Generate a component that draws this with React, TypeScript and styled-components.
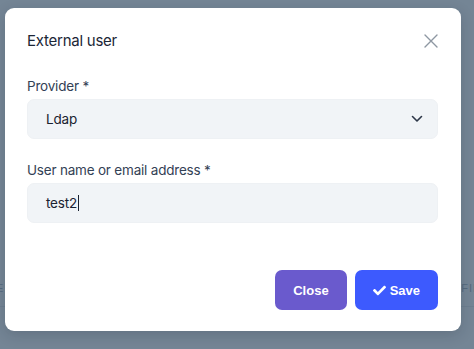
import React from 'react';
import styled, { createGlobalStyle } from 'styled-components';
import { FaCheck } from 'react-icons/fa';

const GlobalStyle = createGlobalStyle`
  html, body {
    margin: 0;
    padding: 0;
    width: 474px;
    height: 349px;
    overflow: hidden;
    background: #72879a;
    font-family: Inter, "Noto Sans", sans-serif;
  }
`;

const Page = styled.div`
  position: relative;
  width: 474px;
  height: 349px;
  background: #ffffff;
`;

const BackTable = styled.div`
  display: flex;
  flex-direction: column;
  padding-top: 270px;
`;

const BackRow = styled.div`
  display: flex;
  justify-content: space-between;
  align-items: center;
  height: 36px;
  border-bottom: 1px solid #dfe3e8;
  font-family: "Liberation Sans", Arial, sans-serif;
  font-size: 11px;
  letter-spacing: 1px;
  color: #8a96a3;
  margin-left: -4px;
  margin-right: -8px;
`;

const Overlay = styled.div`
  position: absolute;
  inset: 0;
  background: rgba(67, 90, 112, 0.74);
  display: flex;
  align-items: flex-start;
  justify-content: flex-start;
  padding: 8px 0 0 5px;
`;

const Modal = styled.div`
  width: 456px;
  height: 323px;
  box-sizing: border-box;
  background: #ffffff;
  border-radius: 9px;
  padding: 22px 23px 21px 22px;
  display: flex;
  flex-direction: column;
  box-shadow: 0 4px 14px rgba(20, 30, 45, 0.18);
`;

const Header = styled.div`
  display: flex;
  align-items: center;
  justify-content: space-between;
  height: 22px;
`;

const Title = styled.h2`
  margin: 0;
  font-size: 15px;
  font-weight: 400;
  letter-spacing: -0.25px;
  color: #1b2636;
  line-height: 22px;
`;

const CloseIcon = styled.button`
  border: none;
  background: none;
  padding: 0;
  width: 16px;
  height: 16px;
  margin-right: -1px;
  display: flex;
  cursor: pointer;
`;

const Field = styled.div<{ $top: number }>`
  display: flex;
  flex-direction: column;
  gap: 3px;
  margin-top: ${p => p.$top}px;
`;

const Label = styled.label`
  font-size: 13.5px;
  line-height: 20px;
  letter-spacing: -0.2px;
  color: #334155;
`;

const Box = styled.div`
  height: 40px;
  box-sizing: border-box;
  background: #f1f4f7;
  border: 1px solid #eef1f4;
  border-radius: 7px;
  padding: 0 14px 0 18px;
  display: flex;
  align-items: center;
  justify-content: space-between;
  font-size: 13.5px;
  letter-spacing: -0.2px;
  color: #1a2230;
`;

const Caret = styled.span`
  display: inline-block;
  width: 1px;
  height: 16px;
  background: #1a2230;
  margin-left: 1px;
`;

const Value = styled.span`
  display: flex;
  align-items: center;
`;

const Footer = styled.div`
  margin-top: auto;
  display: flex;
  justify-content: flex-end;
  gap: 8px;
`;

const Button = styled.button<{ $variant: 'close' | 'save' }>`
  height: 40px;
  border: none;
  border-radius: 7px;
  background: ${p => (p.$variant === 'close' ? '#6a5acd' : '#3d5afe')};
  color: #ffffff;
  font-family: "Liberation Sans", Arial, sans-serif;
  font-weight: 700;
  font-size: 13px;
  padding: 0 18px;
  display: flex;
  align-items: center;
  gap: 4px;
  cursor: pointer;
`;

export default function App() {
  return (
    <>
      <GlobalStyle />
      <Page>
        <BackTable>
          <BackRow>
            <span>E</span>
            <span>FIR</span>
          </BackRow>
        </BackTable>
        <Overlay>
          <Modal>
            <Header>
              <Title>External user</Title>
              <CloseIcon aria-label="Close">
                <svg width="16" height="16" viewBox="0 0 16 16" fill="none">
                  <path d="M2 2L14 14M14 2L2 14" stroke="#8e97a2" strokeWidth="1.4" strokeLinecap="round" />
                </svg>
              </CloseIcon>
            </Header>
            <Field $top={24}>
              <Label>Provider *</Label>
              <Box>
                <Value>Ldap</Value>
                <svg width="12" height="8" viewBox="0 0 12 8" fill="none">
                  <path d="M1.5 1.5L6 6L10.5 1.5" stroke="#2d3748" strokeWidth="1.6" strokeLinecap="round" strokeLinejoin="round" />
                </svg>
              </Box>
            </Field>
            <Field $top={21}>
              <Label>User name or email address *</Label>
              <Box>
                <Value>
                  test2
                  <Caret />
                </Value>
              </Box>
            </Field>
            <Footer>
              <Button $variant="close">Close</Button>
              <Button $variant="save">
                <FaCheck size={13} />
                Save
              </Button>
            </Footer>
          </Modal>
        </Overlay>
      </Page>
    </>
  );
}
